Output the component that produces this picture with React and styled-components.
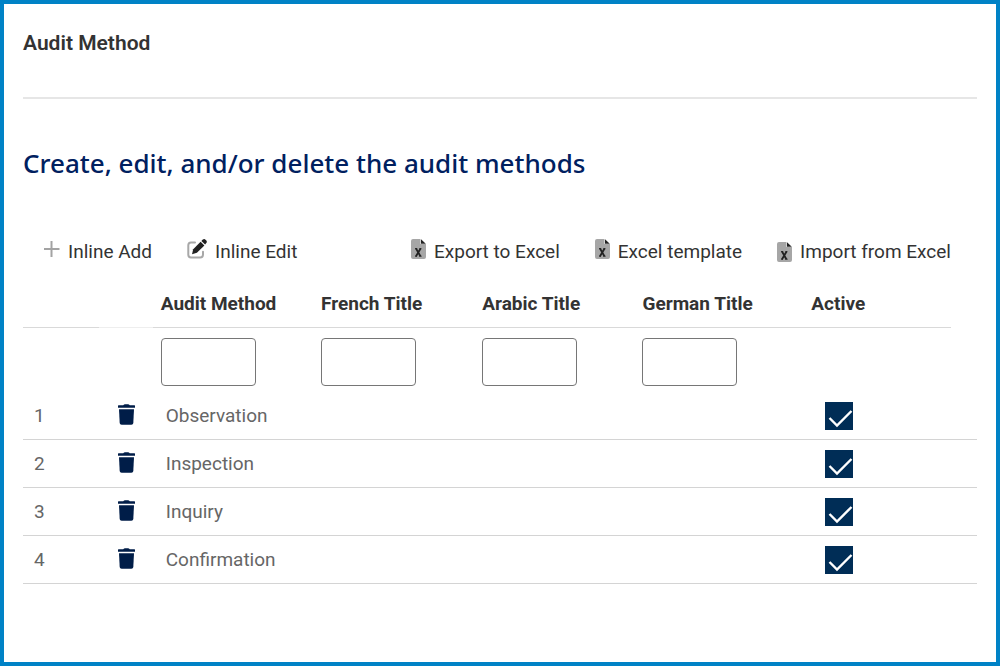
import React, { Component } from 'react';
import styled, { createGlobalStyle } from 'styled-components';

const GlobalStyle = createGlobalStyle`
  * {
    box-sizing: border-box;
  }

  body {
    margin: 0;
    background: #fff;
    font-family: Roboto, "Liberation Sans", sans-serif;
    font-size: 19px;
    line-height: 24px;
    color: #333;
  }
`

const Page = styled.main`
  min-height: 100vh;
  padding: 27px 19px 20px;
  border: 4px solid #0082c6;
`

const PageTitle = styled.h1`
  margin: 0;
  padding-bottom: 42px;
  border-bottom: 2px solid #e6e6e6;
  font-size: 21px;
  line-height: 24px;
  font-weight: 600;
`

const Heading = styled.h2`
  margin: 44px 0 0;
  font-family: "Noto Sans", "Open Sans", sans-serif;
  font-size: 26px;
  line-height: 40px;
  font-weight: 500;
  color: #00205f;
`

const Toolbar = styled.div`
  display: flex;
  justify-content: space-between;
  padding: 0 26px 0 20px;
  margin-top: 56px;
`

const ToolGroup = styled.div`
  display: flex;
  gap: 35px;
`

const ToolButton = styled.button`
  display: flex;
  align-items: center;
  gap: 8px;
  padding: 0;
  border: 0;
  background: none;
  font: inherit;
  color: inherit;
  white-space: nowrap;
  cursor: pointer;
`

const ToolIcon = styled.svg`
  flex: none;
  margin-bottom: ${props => props.$raised ? '6px' : '0'};
`

const Table = styled.table`
  width: 100%;
  margin-top: 15px;
  table-layout: fixed;
  border-collapse: separate;
  border-spacing: 0;
`

const HeadCell = styled.th`
  height: 48px;
  padding: 0 0 0 8px;
  border-bottom: ${props => props.$line ? `1px solid ${props.$line}` : '0'};
  text-align: left;
  font-weight: 700;
  white-space: nowrap;
`

const FilterCell = styled.td`
  height: 64px;
  padding: 10px 0 0 8px;
  vertical-align: top;
`

const FilterInput = styled.input`
  display: block;
  width: 95px;
  height: 48px;
  padding: 0 8px;
  border: 1px solid #767676;
  border-radius: 4px;
  background: #fff;
  font: inherit;
`

const Cell = styled.td`
  height: 48px;
  padding: 0 0 0 ${props => props.$indent}px;
  border-bottom: 1px solid #d4d4d4;
  color: #666;
`

const DeleteButton = styled.button`
  display: block;
  padding: 0 0 2px;
  border: 0;
  background: none;
  color: #001d48;
  cursor: pointer;

  svg {
    display: block;
  }
`

const CheckLabel = styled.label`
  display: block;
  position: relative;
  width: 28px;
  height: 28px;

  svg {
    position: absolute;
    inset: 0;
    pointer-events: none;
  }

  input:not(:checked) + svg {
    display: none;
  }
`

const CheckInput = styled.input`
  appearance: none;
  display: block;
  width: 28px;
  height: 28px;
  margin: 0;
  border: 1px solid #002d56;

  &:checked {
    background: #002d56;
  }
`

const PlusIcon = () => (
  <ToolIcon $raised width="17" height="17" viewBox="0 0 17 17" aria-hidden="true">
    <path d="M8.5 0v16M1 8h15.5" stroke="#a3a3a3" strokeWidth="2" fill="none" />
  </ToolIcon>
)

const EditIcon = () => (
  <ToolIcon $raised width="20" height="20" viewBox="0 0 20 20" aria-hidden="true">
    <path
      d="M8 3.4H4Q1.3 3.4 1.3 6.2V15.5Q1.3 18.6 4 18.6H13.2Q16 18.6 16 15.5V12.8"
      stroke="#a8a8a8"
      strokeWidth="2"
      strokeLinecap="round"
      fill="none"
    />
    <path d="M5 15.2L6.2 10.2L13.6 2.7L17.4 6.4L9.9 13.8Z" fill="#222" />
    <path d="M14.4 1.9L15.8 .6Q17.3 -.4 18.5 .7L19.3 1.5Q20.3 2.7 19.3 4.1L18.1 5.6Z" fill="#222" />
  </ToolIcon>
)

const ExcelIcon = ({ raised }) => (
  <ToolIcon $raised={raised} width="15" height="20" viewBox="0 0 15 20" aria-hidden="true">
    <path d="M2 0H9.5V5H15V18Q15 20 13 20H2Q0 20 0 18V2Q0 0 2 0Z" fill="#a6a6a6" />
    <path d="M10 .3L14.8 4.8H10Z" fill="#222" />
    <path d="M5 9.5L9.4 17.2M9.6 9.5L5 17.2" stroke="#222" strokeWidth="1.8" fill="none" />
    <path d="M4 9.6H6.2M8.5 9.6H10.4M4 17.2H6M8.3 17.2H10.6" stroke="#222" strokeWidth="1" />
  </ToolIcon>
)

const TrashIcon = () => (
  <svg width="17" height="21" viewBox="0 0 17 21" aria-hidden="true">
    <path d="M0.5 1.3H5.2Q6 .2 7 .2H10Q11 .2 11.8 1.3H16.5Q17 1.3 17 2V3.8H0V2Q0 1.3 .5 1.3Z" fill="currentColor" />
    <path d="M1 5.2H16L15.3 19Q15.2 20.8 13.4 20.8H3.6Q1.8 20.8 1.7 19Z" fill="currentColor" />
  </svg>
)

const columnWidths = ['8%', '5.6%', '16.8%', '16.9%', '16.8%', '17.7%', '15.5%', '2.7%']

const titles = ['Audit Method', 'French Title', 'Arabic Title', 'German Title']

const methods = ['Observation', 'Inspection', 'Inquiry', 'Confirmation']

class App extends Component {
  constructor(props) {
    super(props);
    this.state = {
      active: methods.map(() => true)
    }
  }

  toggle(index) {
    this.setState(state => ({
      active: state.active.map((value, i) => i === index ? !value : value)
    }))
  }

  renderRow(name, index) {
    return (
      <tr key={name}>
        <Cell $indent={11}>{index + 1}</Cell>
        <Cell $indent={19}>
          <DeleteButton type="button" aria-label={`Delete ${name}`}>
            <TrashIcon />
          </DeleteButton>
        </Cell>
        <Cell $indent={13}>{name}</Cell>
        <Cell $indent={13} />
        <Cell $indent={13} />
        <Cell $indent={13} />
        <Cell $indent={22} colSpan="2">
          <CheckLabel>
            <CheckInput
              type="checkbox"
              aria-label={`${name} active`}
              checked={this.state.active[index]}
              onChange={() => this.toggle(index)}
            />
            <svg width="28" height="28" viewBox="0 0 28 28" aria-hidden="true">
              <path d="M4.5 16L12 23.5L26.5 9" stroke="#fff" strokeWidth="2.4" fill="none" />
            </svg>
          </CheckLabel>
        </Cell>
      </tr>
    )
  }

  render() {
    return (
      <Page>
        <GlobalStyle />
        <PageTitle>Audit Method</PageTitle>
        <Heading>Create, edit, and/or delete the audit methods</Heading>

        <Toolbar>
          <ToolGroup>
            <ToolButton type="button"><PlusIcon />Inline Add</ToolButton>
            <ToolButton type="button"><EditIcon />Inline Edit</ToolButton>
          </ToolGroup>
          <ToolGroup>
            <ToolButton type="button"><ExcelIcon raised />Export to Excel</ToolButton>
            <ToolButton type="button"><ExcelIcon raised />Excel template</ToolButton>
            <ToolButton type="button"><ExcelIcon />Import from Excel</ToolButton>
          </ToolGroup>
        </Toolbar>

        <Table>
          <colgroup>
            {columnWidths.map((width, i) => <col key={i} width={width} />)}
          </colgroup>
          <thead>
            <tr>
              <HeadCell as="td" $line="#d9d9d9" />
              <HeadCell as="td" $line="#eee" />
              {titles.map(title => <HeadCell key={title} $line="#d9d9d9">{title}</HeadCell>)}
              <HeadCell $line="#d9d9d9">Active</HeadCell>
              <HeadCell as="td" />
            </tr>
          </thead>
          <tbody>
            <tr>
              <FilterCell colSpan="2" />
              {titles.map(title => (
                <FilterCell key={title}>
                  <FilterInput type="text" aria-label={title} />
                </FilterCell>
              ))}
              <FilterCell colSpan="2" />
            </tr>
            {methods.map((name, index) => this.renderRow(name, index))}
          </tbody>
        </Table>
      </Page>
    );
  }
}

export default App;
